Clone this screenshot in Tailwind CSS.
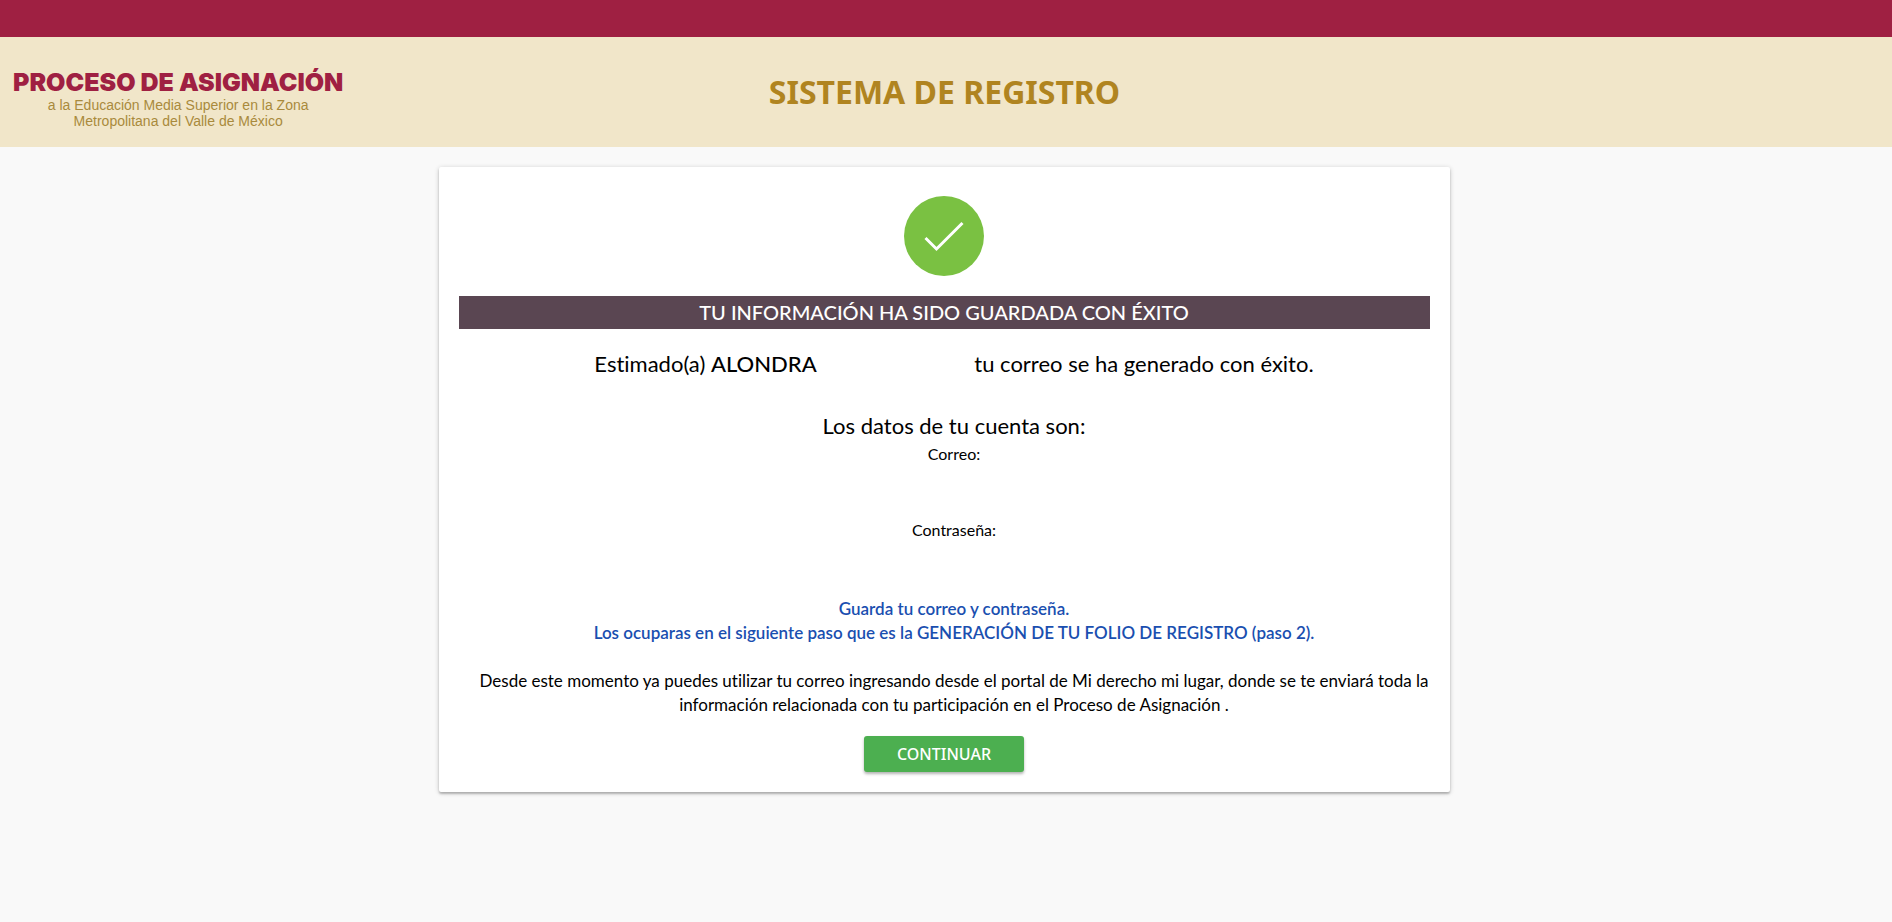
<!DOCTYPE html>
<html lang="es">
<head>
    <meta charset="UTF-8">
    <meta name="viewport" content="width=device-width, initial-scale=1.0">
    <title>Sistema de Registro</title>
    <script src="https://cdn.jsdelivr.net/npm/@tailwindcss/browser@4"></script>
</head>
<body class="min-h-screen bg-[#f9f9f9] font-['Lato',sans-serif] [font-variant-ligatures:none] text-black">

    <!-- Top bar -->
    <div class="h-[37px] bg-[#9f2042]"></div>

    <!-- Header -->
    <header class="grid grid-cols-[1fr_auto_1fr] items-center h-[110px] pl-[13px] pr-4 bg-[#f1e6c9]">
        <div class="justify-self-start pt-3 text-center font-['Liberation_Sans',sans-serif]">
            <p class="text-[25px] leading-7 font-black font-['Inter',sans-serif] text-[#9f2042]">PROCESO DE ASIGNACIÓN</p>
            <p class="pt-px text-sm leading-4 text-[#a98a3c]">a la Educación Media Superior en la Zona<br>Metropolitana del Valle de México</p>
        </div>
        <h1 class="text-[32px] leading-10 font-bold font-['Noto_Sans',sans-serif] text-[#b08420]">SISTEMA DE REGISTRO</h1>
    </header>

    <!-- Confirmation card -->
    <div class="pr-1 pt-5">
        <main class="w-full max-w-[1011px] mx-auto px-5 pt-[29px] pb-5 bg-white rounded-xs shadow-[0_2px_2px_rgba(0,0,0,0.2),0_1px_5px_rgba(0,0,0,0.2)]">
            <svg class="block mx-auto size-20" viewBox="0 0 80 80" fill="none" aria-hidden="true">
                <circle cx="40" cy="40" r="40" fill="#7ac142"/>
                <path d="M21.500 42L32.500 53L58.500 27" stroke="#fff" stroke-width="3"/>
            </svg>

            <h2 class="mt-5 h-[33px] bg-[#5a4652] text-center text-xl leading-[33px] font-medium text-white">TU INFORMACIÓN HA SIDO GUARDADA CON ÉXITO</h2>

            <div class="pl-5 text-center">
                <p class="mt-[19px] text-[22px] leading-8">Estimado(a) <span class="font-medium">ALONDRA</span><span class="inline-block w-[152px]"></span> tu correo se ha generado con éxito.</p>
                <p class="mt-[30px] text-[22px] leading-8">Los datos de tu cuenta son:</p>
                <p class="text-base leading-6">Correo:</p>
                <p class="mt-[52px] text-base leading-6">Contraseña:</p>

                <p class="mt-[55px] text-[17px] leading-6 font-semibold text-[#1a4fb0]">Guarda tu correo y contraseña.<br>Los ocuparas en el siguiente paso que es la GENERACIÓN DE TU FOLIO DE REGISTRO (paso 2).</p>
                <p class="mt-6 text-[17px] leading-6">Desde este momento ya puedes utilizar tu correo ingresando desde el portal de Mi derecho mi lugar, donde se te enviará toda la información relacionada con tu participación en el Proceso de Asignación .</p>
            </div>

            <button type="button" class="block mx-auto mt-[19px] h-9 px-[33px] rounded-[3px] bg-[#4caf50] text-base font-medium font-['Noto_Sans',sans-serif] text-white shadow-[0_2px_3px_rgba(0,0,0,0.3)]">CONTINUAR</button>
        </main>
    </div>

</body>
</html>
